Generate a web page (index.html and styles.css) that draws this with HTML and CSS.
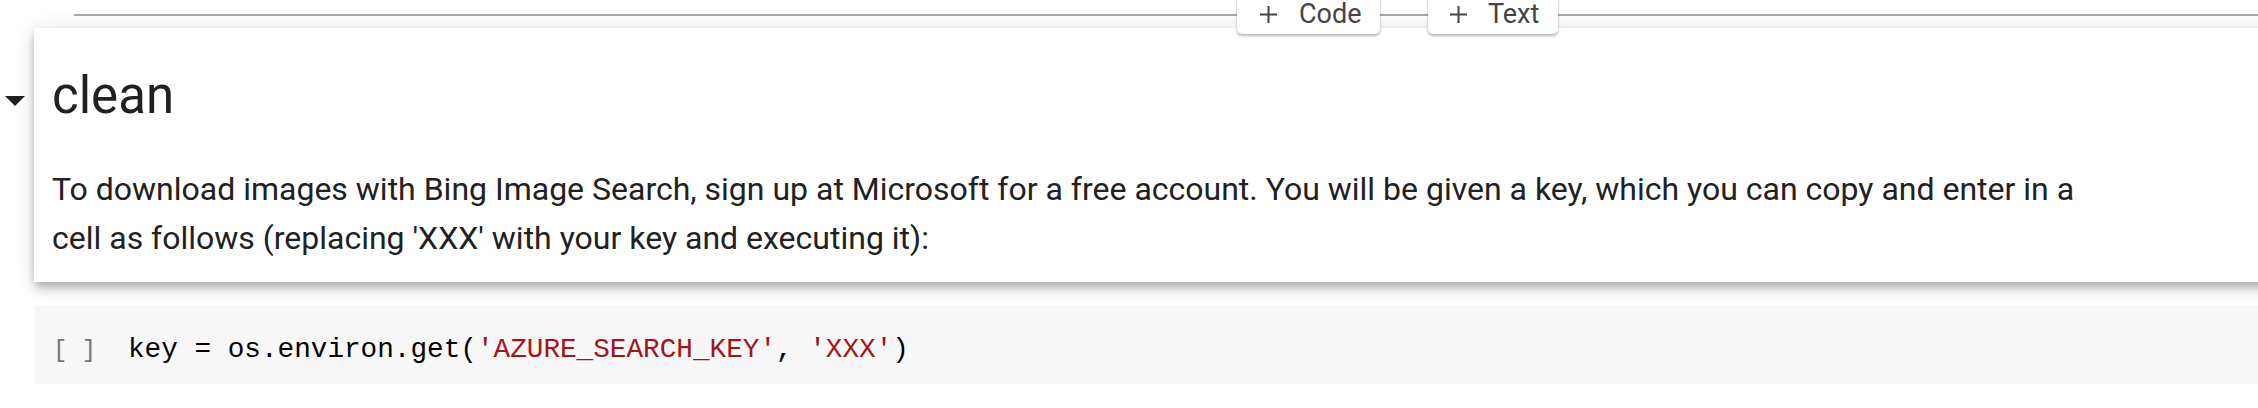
FILE: index.html
```html
<!DOCTYPE html>
<html lang="en">
<head>
<meta charset="utf-8">
<title>clean</title>
<link rel="stylesheet" href="styles.css">
</head>
<body>
<div class="notebook">
  <div class="add-bar">
    <button class="add-btn add-code"><svg class="plus" viewBox="0 0 17 17" width="17" height="17"><path d="M8.5 0v17M0 8.5h17" stroke="#444" stroke-width="2" fill="none"/></svg><span>Code</span></button>
    <button class="add-btn add-text"><svg class="plus" viewBox="0 0 17 17" width="17" height="17"><path d="M8.5 0v17M0 8.5h17" stroke="#444" stroke-width="2" fill="none"/></svg><span>Text</span></button>
  </div>
  <div class="cell-row">
    <div class="gutter">
      <svg class="collapse" viewBox="0 0 20 10" width="20" height="10"><path d="M0 0h20L10 10z" fill="#212121"/></svg>
    </div>
    <div class="card">
      <h1 class="title">clean</h1>
      <p class="body-text">To download images with Bing Image Search, sign up at Microsoft for a free account. You will be given a key, which you can copy and enter in a cell as follows (replacing 'XXX' with your key and executing it):</p>
    </div>
  </div>
  <div class="code-cell">
    <span class="prompt">[ ]</span>
    <code class="code">key = os.environ.get(<span class="str">'AZURE_SEARCH_KEY'</span>, <span class="str">'XXX'</span>)</code>
  </div>
</div>
</body>
</html>
```

FILE: styles.css
```css
html, body {
  margin: 0;
  padding: 0;
  background: #fff;
  overflow: hidden;
}

.notebook {
  margin-right: -30px;
  font-family: Roboto, "Noto Sans", Arial, sans-serif;
  color: #212121;
}

.add-bar {
  height: 28px;
  margin-left: 74px;
  padding-left: 1163px;
  display: flex;
  align-items: center;
  gap: 48px;
  background: linear-gradient(#a9a9a9, #a9a9a9) no-repeat 0 14px / 100% 2px;
}

.add-btn {
  position: relative;
  z-index: 2;
  flex-shrink: 0;
  height: 40px;
  display: flex;
  align-items: center;
  gap: 22px;
  padding: 0 18px 0 23px;
  border: none;
  border-radius: 5px;
  background: #fff;
  color: #444;
  font-family: Roboto, Arial, sans-serif;
  font-size: 27px;
  box-shadow: 0 2px 3px rgba(0,0,0,0.28), 0 0 1px rgba(0,0,0,0.2);
}

.add-code { width: 143px; }
.add-text { width: 130px; padding-left: 22px; padding-right: 17px; gap: 21px; }

.plus { flex-shrink: 0; }

.cell-row {
  display: flex;
}

.gutter {
  width: 34px;
  flex-shrink: 0;
}

.collapse {
  display: block;
  margin: 68px 0 0 5px;
}

.card {
  flex: 1;
  background: #fff;
  padding: 38px 0 19px 18px;
  box-shadow: 0 8px 10px 0 rgba(0,0,0,0.14), 0 2px 20px 0 rgba(0,0,0,0.12), 0 4px 8px -2px rgba(0,0,0,0.2);
}

.title {
  margin: 0;
  font-size: 51px;
  line-height: 60px;
  font-weight: 400;
  color: #212121;
}

.body-text {
  margin: 39px 0 0;
  max-width: 2040px;
  font-size: 32px;
  line-height: 49px;
  color: #212121;
}

.code-cell {
  margin: 24px 0 0 34px;
  height: 40px;
  padding: 24px 0 14px 19px;
  background: #f7f7f7;
  display: flex;
  align-items: baseline;
  font-family: "Liberation Mono", "Courier New", monospace;
  line-height: 40px;
}

.prompt {
  font-size: 24px;
  color: #757575;
  width: 75px;
  flex-shrink: 0;
  white-space: pre;
}

.code {
  font-family: "Liberation Mono", "Courier New", monospace;
  font-size: 27.7px;
  color: #000;
  white-space: pre;
}

.str {
  color: #a31515;
}
```
